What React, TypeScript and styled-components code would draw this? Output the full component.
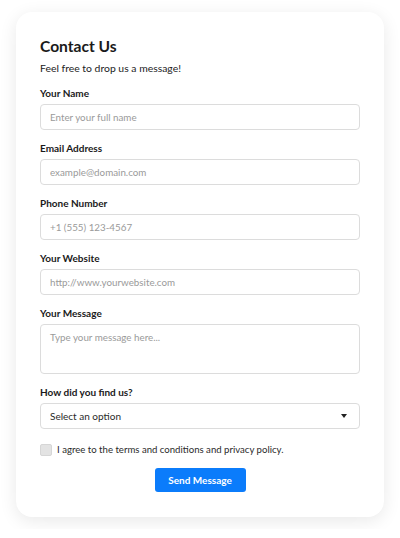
import React from "react";
import styled, { createGlobalStyle } from "styled-components";

const GlobalStyle = createGlobalStyle`
  html, body {
    margin: 0;
    padding: 0;
    background: #ffffff;
  }
  body {
    font-family: Lato, "Noto Sans", sans-serif;
    color: #222;
  }
  * {
    box-sizing: border-box;
  }
`;

const Card = styled.form`
  width: 368px;
  margin: 12px 16px;
  padding: 22px 24px 25px;
  background: #fff;
  border-radius: 16px;
  box-shadow: 0 4px 18px rgba(0, 0, 0, 0.09);
  display: flex;
  flex-direction: column;
`;

const Title = styled.h1`
  margin: 0;
  font-size: 15.6px;
  line-height: 24px;
  font-weight: 700;
  color: #1a1a1a;
`;

const Subtitle = styled.p`
  margin: 0 0 7px;
  font-size: 10.4px;
  line-height: 20px;
  color: #222;
`;

const Field = styled.div`
  display: flex;
  flex-direction: column;
  margin-bottom: 10px;
`;

const Label = styled.label`
  font-size: 10px;
  line-height: 16px;
  font-weight: 700;
  color: #1a1a1a;
  margin-bottom: 3px;
`;

const Input = styled.input`
  height: 26px;
  width: 100%;
  border: 1px solid #dcdcdc;
  border-radius: 4px;
  padding: 0 9px;
  font-family: inherit;
  font-size: 9.8px;
  color: #333;
  &::placeholder {
    color: #9a9a9a;
  }
`;

const TextArea = styled.textarea`
  height: 50px;
  width: 100%;
  border: 1px solid #dcdcdc;
  border-radius: 4px;
  padding: 6px 9px;
  font-family: inherit;
  font-size: 9.8px;
  resize: none;
  &::placeholder {
    color: #9a9a9a;
  }
`;

const SelectBox = styled.div`
  height: 26px;
  border: 1px solid #dcdcdc;
  border-radius: 4px;
  padding: 0 12px 0 9px;
  display: flex;
  align-items: center;
  justify-content: space-between;
  font-size: 10px;
  color: #2a2a2a;
`;

const Caret = styled.span`
  width: 0;
  height: 0;
  border-left: 3.5px solid transparent;
  border-right: 3.5px solid transparent;
  border-top: 4px solid #222;
`;

const CheckRow = styled.label`
  display: flex;
  align-items: center;
  gap: 5px;
  margin-top: 3px;
  font-size: 9.6px;
  line-height: 16px;
  color: #2a2a2a;
`;

const CheckBox = styled.span`
  width: 12px;
  height: 12px;
  border-radius: 2px;
  background: #e3e3e3;
  border: 1px solid #d6d6d6;
`;

const Button = styled.button`
  align-self: center;
  margin-top: 10px;
  width: 91px;
  height: 24px;
  border: none;
  border-radius: 3px;
  background: #0b7cfb;
  color: #fff;
  font-family: inherit;
  font-size: 10px;
  font-weight: 700;
`;

const fields = [
  { label: "Your Name", placeholder: "Enter your full name" },
  { label: "Email Address", placeholder: "example@domain.com" },
  { label: "Phone Number", placeholder: "+1 (555) 123-4567" },
  { label: "Your Website", placeholder: "http://www.yourwebsite.com" },
];

export default function App() {
  return (
    <>
      <GlobalStyle />
      <Card onSubmit={(e) => e.preventDefault()}>
        <Title>Contact Us</Title>
        <Subtitle>Feel free to drop us a message!</Subtitle>
        {fields.map((f) => (
          <Field key={f.label}>
            <Label>{f.label}</Label>
            <Input placeholder={f.placeholder} />
          </Field>
        ))}
        <Field>
          <Label>Your Message</Label>
          <TextArea placeholder="Type your message here..." />
        </Field>
        <Field>
          <Label>How did you find us?</Label>
          <SelectBox>
            Select an option
            <Caret />
          </SelectBox>
        </Field>
        <CheckRow>
          <CheckBox />I agree to the terms and conditions and privacy policy.
        </CheckRow>
        <Button type="submit">Send Message</Button>
      </Card>
    </>
  );
}
